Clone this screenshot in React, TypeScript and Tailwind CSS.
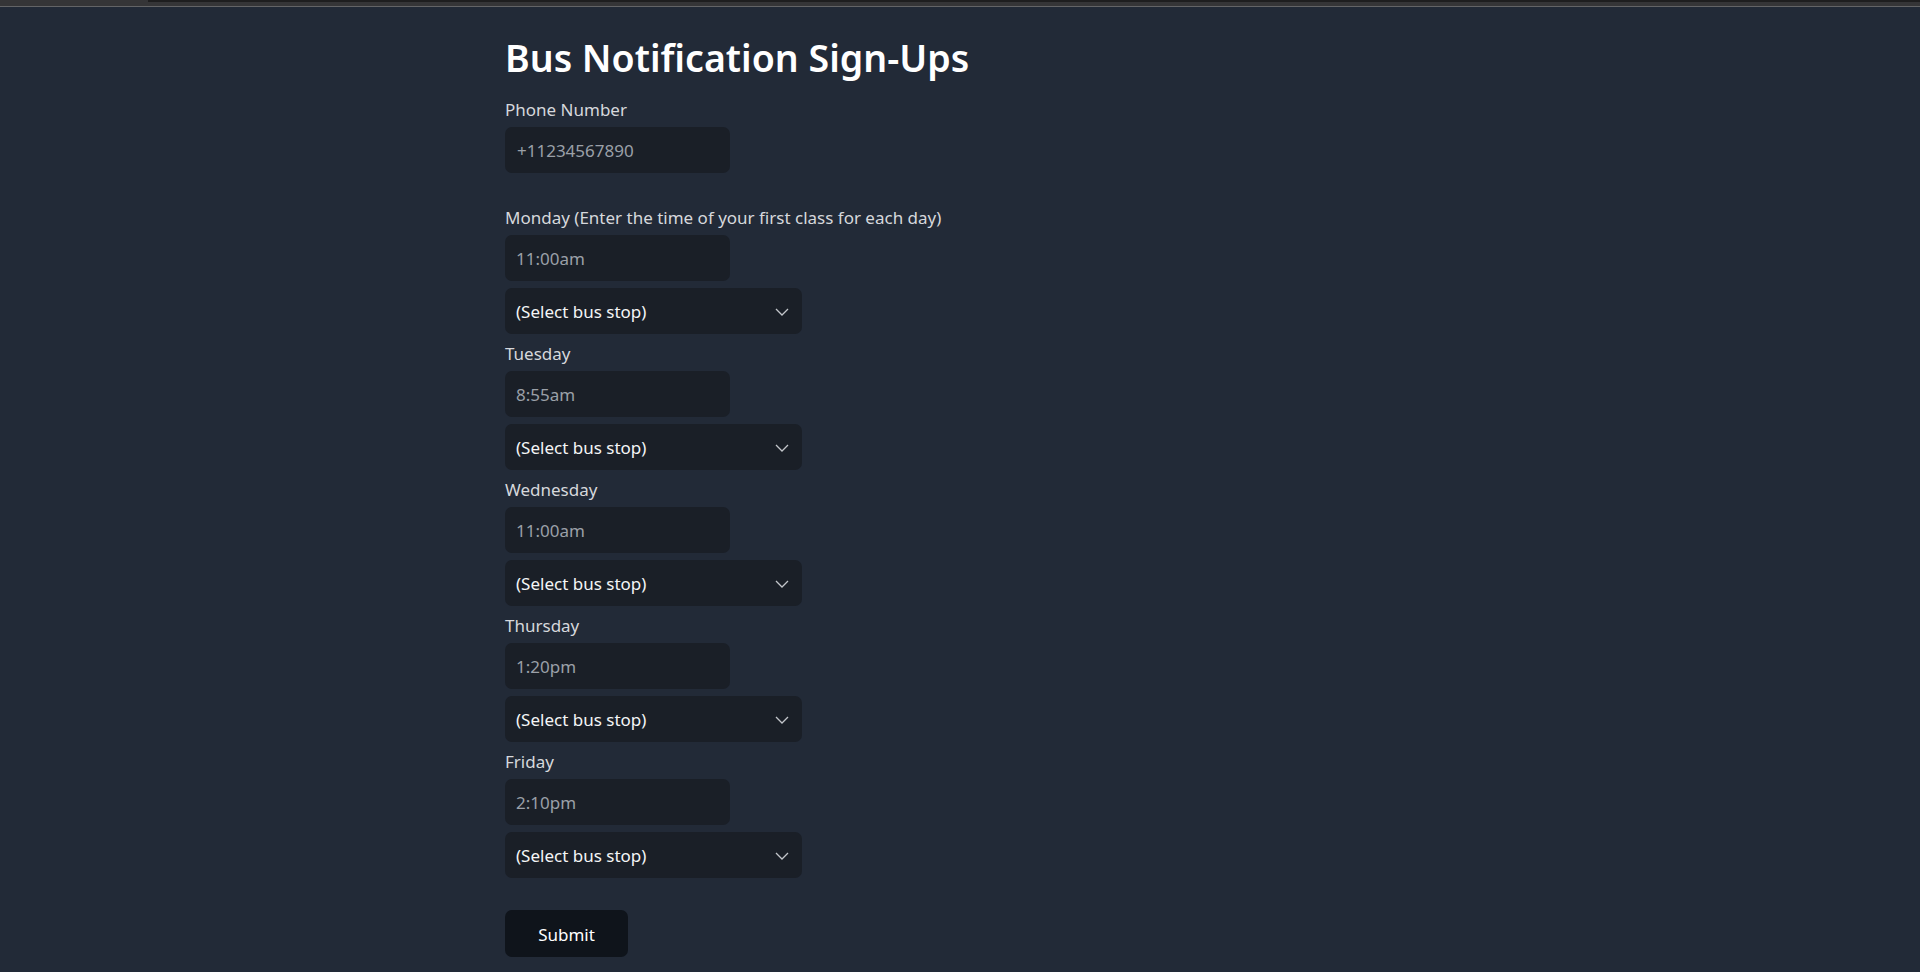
import React from "react";

const days = [
  { label: "Monday (Enter the time of your first class for each day)", time: "11:00am" },
  { label: "Tuesday", time: "8:55am" },
  { label: "Wednesday", time: "11:00am" },
  { label: "Thursday", time: "1:20pm" },
  { label: "Friday", time: "2:10pm" },
];

function Chevron() {
  return (
    <svg width="14" height="8" viewBox="0 0 14 8" fill="none" className="shrink-0">
      <path d="M1 1 L7 7 L13 1" stroke="#c3c6cb" strokeWidth="1.3" />
    </svg>
  );
}

function SelectBox() {
  return (
    <div className="mt-[7px] flex h-[46px] w-[297px] items-center justify-between rounded-[7px] bg-[#1a1f27] pl-[11px] pr-[13px] pt-[2px] text-[17px] text-[#f4f5f6]">
      <span>(Select bus stop)</span>
      <Chevron />
    </div>
  );
}

export default function App() {
  return (
    <div
      className="min-h-[972px] bg-[#222a37] text-[#d6d8dc]"
      style={{ fontFamily: '"Noto Sans", "Open Sans", sans-serif' }}
    >
      <div className="flex h-[6px] bg-[#353537]">
        <div className="w-[148px]" />
        <div className="flex-1 border-t-2 border-[#1e1e1f]" />
      </div>
      <div className="h-px bg-[#636466]" />
      <div className="mx-auto w-[910px]">
        <h1 className="mt-[27px] text-[37.5px] font-semibold leading-[48px] text-white">
          Bus Notification Sign-Ups
        </h1>
        <div className="mt-[16px] text-[17px] leading-[23px]">Phone Number</div>
        <div className="mt-[6px] flex h-[46px] w-[225px] items-center rounded-[7px] bg-[#1a1f27] px-[12px] pt-[2px] text-[17px] text-[#9ba0a8]">
          +11234567890
        </div>
        <div className="mt-[32px]">
          {days.map((d, i) => (
            <div key={i} className={i > 0 ? "mt-[7px]" : ""}>
              <div className="pt-px text-[17px] leading-[23px]">{d.label}</div>
              <div className="mt-[6px] flex h-[46px] w-[225px] items-center rounded-[7px] bg-[#1a1f27] px-[11px] pt-[2px] text-[17px] text-[#9ba0a8]">
                {d.time}
              </div>
              <SelectBox />
            </div>
          ))}
        </div>
        <button className="mt-[32px] flex h-[47px] w-[123px] items-center justify-center rounded-[7px] bg-[#0f141b] pt-[2px] text-[17px] text-white">
          Submit
        </button>
      </div>
    </div>
  );
}
